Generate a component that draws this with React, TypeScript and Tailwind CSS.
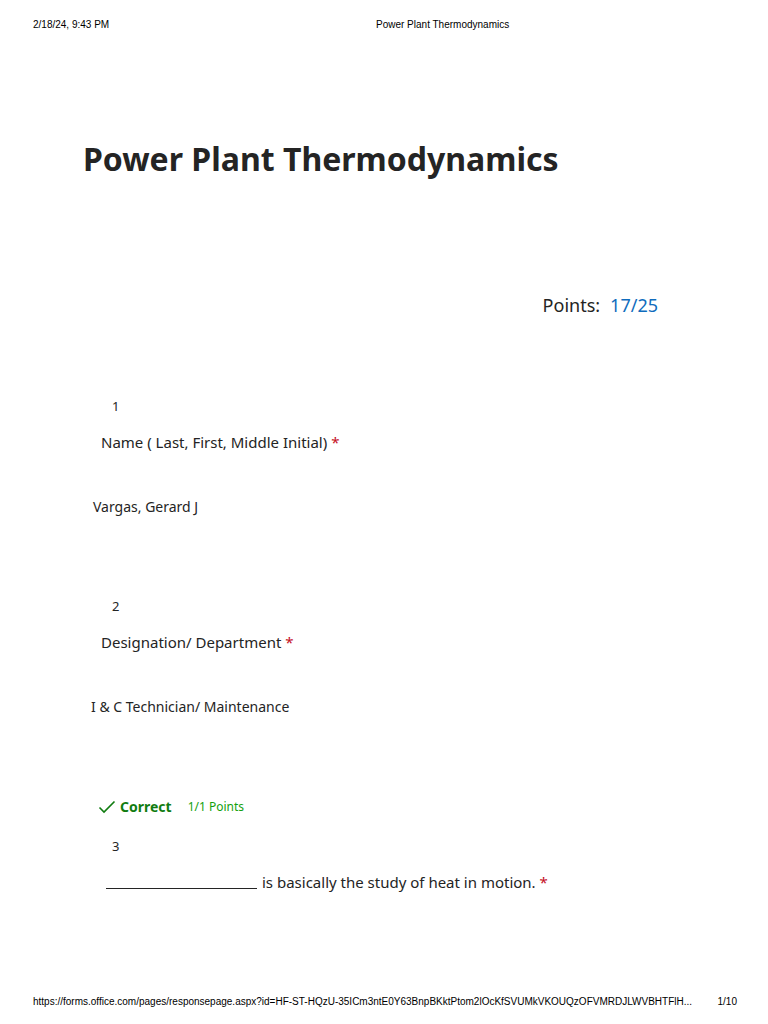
export default function App() {
  return (
    <div className="h-[1024px] w-[768px] flex flex-col bg-white text-[#242424] overflow-hidden">
      {/* Print header */}
      <div className="flex px-[33px] pt-[19px] text-[10px] leading-[12px] text-black whitespace-nowrap" style={{ fontFamily: '"Liberation Sans", Arial, sans-serif' }}>
        <span className="w-[343px]">2/18/24, 9:43 PM</span>
        <span>Power Plant Thermodynamics</span>
      </div>

      {/* Form body */}
      <div className="flex-1 pl-[83px] pr-[110px]" style={{ fontFamily: '"Noto Sans", "Open Sans", sans-serif' }}>
        <h1 className="mt-[108px] text-[32px] leading-[40px] font-bold text-[#242424]">Power Plant Thermodynamics</h1>

        <div className="mt-[114px] flex justify-end text-[18px] leading-[24px]">
          <span>Points:</span>
          <span className="ml-[10px] text-[#0f6cbd]">17/25</span>
        </div>

        {/* Q1 */}
        <div className="mt-[80px] pl-[29px] text-[13px] leading-[18px]">1</div>
        <div className="mt-[16px] pl-[18px] text-[15px] leading-[22px]">
          Name ( Last, First, Middle Initial) <span className="text-[#c50f1f]">*</span>
        </div>
        <div className="mt-[43px] pl-[10px] text-[14px] leading-[21px]">Vargas, Gerard J</div>

        {/* Q2 */}
        <div className="mt-[80px] pl-[29px] text-[13px] leading-[18px]">2</div>
        <div className="mt-[16px] pl-[18px] text-[15px] leading-[22px]">
          Designation/ Department <span className="text-[#c50f1f]">*</span>
        </div>
        <div className="mt-[43px] pl-[8px] text-[14px] leading-[21px]">I &amp; C Technician/ Maintenance</div>

        {/* Q3 */}
        <div className="mt-[80px] pl-[15px] flex items-center">
          <svg width="18" height="14" viewBox="0 0 18 14" fill="none" className="mr-[4px]">
            <path d="M1.5 7.5 L6 12 L16.5 1.5" stroke="#107c10" strokeWidth="1.6" />
          </svg>
          <span className="text-[14px] leading-[20px] font-bold text-[#107c10]">Correct</span>
          <span className="ml-[16px] text-[12px] leading-[20px] text-[#13a10e]">1/1 Points</span>
        </div>
        <div className="mt-[20px] pl-[29px] text-[13px] leading-[18px]">3</div>
        <div className="mt-[16px] pl-[23px] text-[15px] leading-[22px] flex items-end">
          <span className="inline-block w-[151px] border-b border-[#242424] mb-[4px] mr-[5px]" />
          <span>is basically the study of heat in motion. <span className="text-[#c50f1f]">*</span></span>
        </div>
      </div>

      {/* Print footer */}
      <div className="flex justify-between pl-[33px] pr-[31px] pb-[16px] text-[10px] leading-[12px] text-black whitespace-nowrap" style={{ fontFamily: '"Liberation Sans", Arial, sans-serif' }}>
        <span>https://forms.office.com/pages/responsepage.aspx?id=HF-ST-HQzU-35ICm3ntE0Y63BnpBKktPtom2lOcKfSVUMkVKOUQzOFVMRDJLWVBHTFlH...</span>
        <span>1/10</span>
      </div>
    </div>
  )
}
